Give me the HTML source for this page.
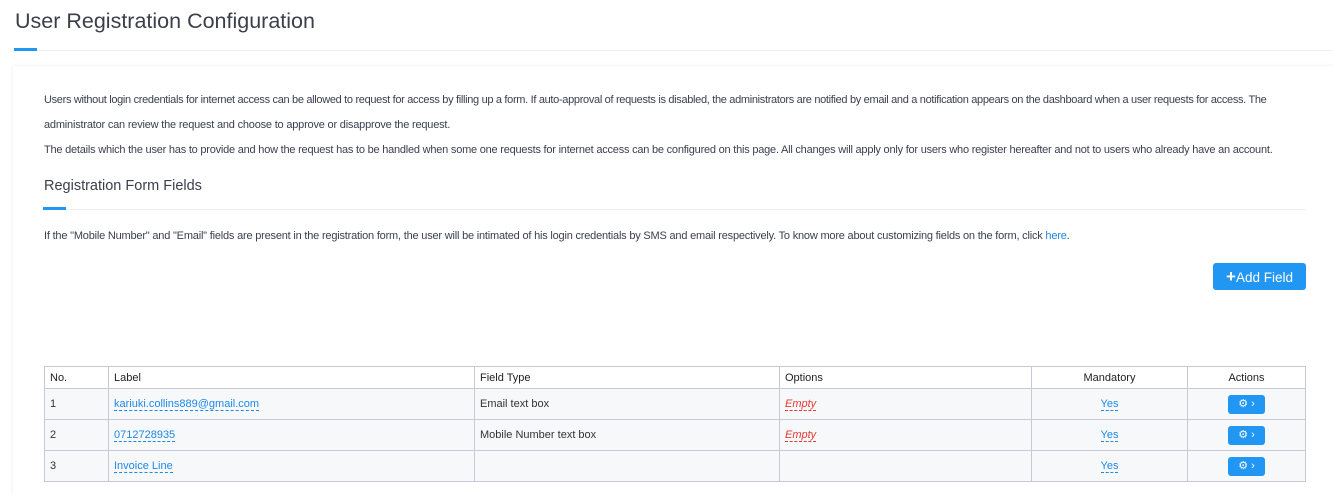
<!DOCTYPE html><html><head><style>
body{margin:0;width:1333px;height:483px;overflow:hidden;background:#fff;font-family:"Liberation Sans",sans-serif;color:#333;}
.t{position:absolute;left:15px;top:9px;font-size:21.5px;color:#3b3f4a;}
.bar{position:absolute;height:3px;background:#2196f3;}
.line{position:absolute;height:1px;background:#eceef1;}
.panel{position:absolute;left:13px;top:66px;width:1330px;height:430px;box-shadow:0 0 4px rgba(0,0,0,.08);}
.p{position:absolute;left:44px;font-size:11px;color:#3a3f4f;white-space:nowrap;letter-spacing:-0.2px}
a{color:#1e88e5;text-decoration:none}
.btn{position:absolute;left:1213px;top:263px;width:93px;height:27px;background:#2196f3;border-radius:3px;color:#fff;font-size:13.5px;line-height:27px;text-align:center}
table{position:absolute;left:44px;top:366px;border-collapse:collapse;font-size:11px;color:#333}
td,th{border:1px solid #c5cad6;padding:0 5px;text-align:left;font-weight:normal;height:30px}
th{height:21px;color:#222}
tr.r td{background:#f7f8fa}
.u{border-bottom:1px dashed #1e88e5;color:#1e88e5}
.e{color:#e53935;font-style:italic;border-bottom:1px dashed #e53935}
.c{text-align:center}
.g{display:inline-block;width:37px;height:19px;background:#2196f3;border-radius:3px;color:#fff;font-size:11px;line-height:19px;text-align:center;vertical-align:middle}
</style></head><body>
<div class="t">User Registration Configuration</div>
<div class="line" style="left:14px;top:50px;width:1319px"></div>
<div class="bar" style="left:14px;top:48px;width:23px"></div>
<div class="panel"></div>
<div class="p" style="top:94px;letter-spacing:-0.32px">Users without login credentials for internet access can be allowed to request for access by filling up a form. If auto-approval of requests is disabled, the administrators are notified by email and a notification appears on the dashboard when a user requests for access. The</div>
<div class="p" style="top:119px">administrator can review the request and choose to approve or disapprove the request.</div>
<div class="p" style="top:144px;letter-spacing:-0.22px">The details which the user has to provide and how the request has to be handled when some one requests for internet access can be configured on this page. All changes will apply only for users who register hereafter and not to users who already have an account.</div>
<div class="p" style="top:178px;font-size:14.5px;color:#3b3f4a;letter-spacing:0">Registration Form Fields</div>
<div class="line" style="left:43px;top:209px;width:1263px"></div>
<div class="bar" style="left:43px;top:207px;width:23px"></div>
<div class="p" style="top:230px">If the "Mobile Number" and "Email" fields are present in the registration form, the user will be intimated of his login credentials by SMS and email respectively. To know more about customizing fields on the form, click <a>here</a>.</div>
<div class="btn"><b style="font-size:17px">+</b>Add Field</div>
<table>
<tr><th style="width:53px">No.</th><th style="width:355px">Label</th><th style="width:294px">Field Type</th><th style="width:241px">Options</th><th class="c" style="width:145px">Mandatory</th><th class="c" style="width:107px">Actions</th></tr>
<tr class="r"><td>1</td><td><span class="u">kariuki.collins889@gmail.com</span></td><td>Email text box</td><td><span class="e">Empty</span></td><td class="c"><span class="u">Yes</span></td><td class="c"><span class="g">⚙ ›</span></td></tr>
<tr class="r"><td>2</td><td><span class="u">0712728935</span></td><td>Mobile Number text box</td><td><span class="e">Empty</span></td><td class="c"><span class="u">Yes</span></td><td class="c"><span class="g">⚙ ›</span></td></tr>
<tr class="r"><td>3</td><td><span class="u">Invoice Line</span></td><td></td><td></td><td class="c"><span class="u">Yes</span></td><td class="c"><span class="g">⚙ ›</span></td></tr>
</table>
</body></html>
